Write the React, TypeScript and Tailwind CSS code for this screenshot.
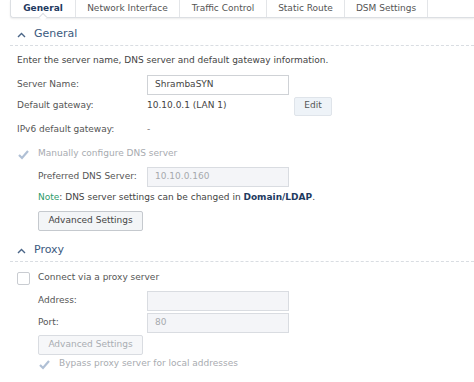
import { ReactNode } from "react";

const font = { fontFamily: '"DejaVu Sans", Verdana, sans-serif' };

function Chevron() {
  return (
    <svg width="9" height="6" viewBox="0 0 9 6" className="mr-[8px]">
      <polyline points="1,5 4.5,1.5 8,5" fill="none" stroke="#4a6587" strokeWidth="1.4" />
    </svg>
  );
}

function SectionHeader({ title }: { title: string }) {
  return (
    <div className="ml-[10px] border-b border-dashed border-[#d9dde2] pl-[7px] h-[22px] flex items-center">
      <Chevron />
      <span className="text-[11px] text-[#3b5a80]">{title}</span>
    </div>
  );
}

function Check({ checked, disabled }: { checked?: boolean; disabled?: boolean }) {
  if (checked) {
    return (
      <svg width="13" height="13" viewBox="0 0 13 13" className={disabled ? "opacity-70" : ""}>
        <polyline points="2,7 5,10 11,3" fill="none" stroke="#8fa6c4" strokeWidth="2.2" />
      </svg>
    );
  }
  return <span className="block w-[13px] h-[13px] border border-[#c9ccd1] rounded-[2px] bg-white" />;
}

function Row({ label, children, indent, className = "" }: { label: string; children?: ReactNode; indent?: boolean; className?: string }) {
  return (
    <div className={`flex items-center ${className}`}>
      <span className={`${indent ? "w-[109px] pl-[21px] box-content" : "w-[130px]"} shrink-0 text-[#555]`}>{label}</span>
      {children}
    </div>
  );
}

function Input({ value, disabled }: { value?: string; disabled?: boolean }) {
  return (
    <div
      className={`w-[142px] h-[20px] border flex items-center px-[7px] ${
        disabled ? "bg-[#f4f5f8] border-[#d9dce1] text-[#a6a9ad]" : "bg-white border-[#cfd2d6] text-[#444]"
      }`}
    >
      {value}
    </div>
  );
}

function Button({ children, disabled }: { children: ReactNode; disabled?: boolean }) {
  return (
    <div
      className={`inline-flex items-center justify-center h-[20px] w-[105px] border rounded-[2px] ${
        disabled ? "border-[#d9dce1] bg-[#f6f7f9] text-[#a9adb2]" : "border-[#c5c9ce] bg-[#f3f5f7] text-[#444]"
      }`}
    >
      {children}
    </div>
  );
}

const tabs = [
  { name: "General", w: 65 },
  { name: "Network Interface", w: 104 },
  { name: "Traffic Control", w: 87 },
  { name: "Static Route", w: 78 },
  { name: "DSM Settings", w: 83 },
];

export default function App() {
  return (
    <div className="w-[474px] h-[382px] bg-white overflow-hidden text-[9px] text-[#444]" style={font}>
      {/* Tabs */}
      <div className="relative ml-[10px] h-[18px] flex border-l border-b border-[#dcdfe3] rounded-bl-[3px] shadow-[0_1px_2px_rgba(0,0,0,0.08)]">
        {tabs.map((t, i) => (
          <div
            key={t.name}
            className={`h-full flex items-center justify-center border-r border-[#e3e5e8] ${
              i === 0 ? "font-bold text-[#1e3a5f]" : "text-[#555]"
            }`}
            style={{ width: t.w }}
          >
            {t.name}
          </div>
        ))}
        <span className="absolute left-[29px] top-[14px] w-[6px] h-[6px] rotate-45 bg-white border-l border-t border-[#dcdfe3]" />
      </div>

      <div className="mt-[6px]">
        <SectionHeader title="General" />
      </div>

      <div className="pl-[17px]">
        <div className="mt-[8px] h-[12px] leading-[12px]">Enter the server name, DNS server and default gateway information.</div>
        <Row label="Server Name:" className="mt-[9px] h-[20px]">
          <Input value="ShrambaSYN" />
        </Row>
        <Row label="Default gateway:" className="h-[22px]">
          <span className="w-[147px]">10.10.0.1 (LAN 1)</span>
          <span className="h-[19px] w-[38px] flex items-center justify-center border border-[#dfe4ea] bg-[#eef3f8] text-[#555] rounded-[2px]">
            Edit
          </span>
        </Row>
        <Row label="IPv6 default gateway:" className="mt-[1px] h-[24px]">
          <span className="text-[#777]">-</span>
        </Row>
        <div className="h-[24px] flex items-center gap-[8px] text-[#a8abb0]">
          <Check checked disabled />
          <span>Manually configure DNS server</span>
        </div>
        <Row label="Preferred DNS Server:" indent className="h-[21px]">
          <Input value="10.10.0.160" disabled />
        </Row>
        <div className="pl-[21px] mt-[4px] h-[12px] leading-[12px]">
          <span className="text-[#2e9b6b]">Note</span>: DNS server settings can be changed in{" "}
          <span className="font-bold text-[#1e3a5f]">Domain/LDAP</span>.
        </div>
        <div className="pl-[21px] mt-[8px]">
          <Button>Advanced Settings</Button>
        </div>
      </div>

      <div className="mt-[9px]">
        <SectionHeader title="Proxy" />
      </div>

      <div className="pl-[17px]">
        <div className="mt-[6px] h-[20px] flex items-center gap-[8px] text-[#555]">
          <Check />
          <span>Connect via a proxy server</span>
        </div>
        <Row label="Address:" indent className="mt-[3px] h-[20px]">
          <Input disabled />
        </Row>
        <Row label="Port:" indent className="mt-[2px] h-[20px]">
          <Input value="80" disabled />
        </Row>
        <div className="pl-[21px] mt-[2px]">
          <Button disabled>Advanced Settings</Button>
        </div>
        <div className="pl-[21px] h-[18px] flex items-center gap-[8px] text-[#a8abb0]">
          <Check checked disabled />
          <span>Bypass proxy server for local addresses</span>
        </div>
      </div>
    </div>
  );
}
